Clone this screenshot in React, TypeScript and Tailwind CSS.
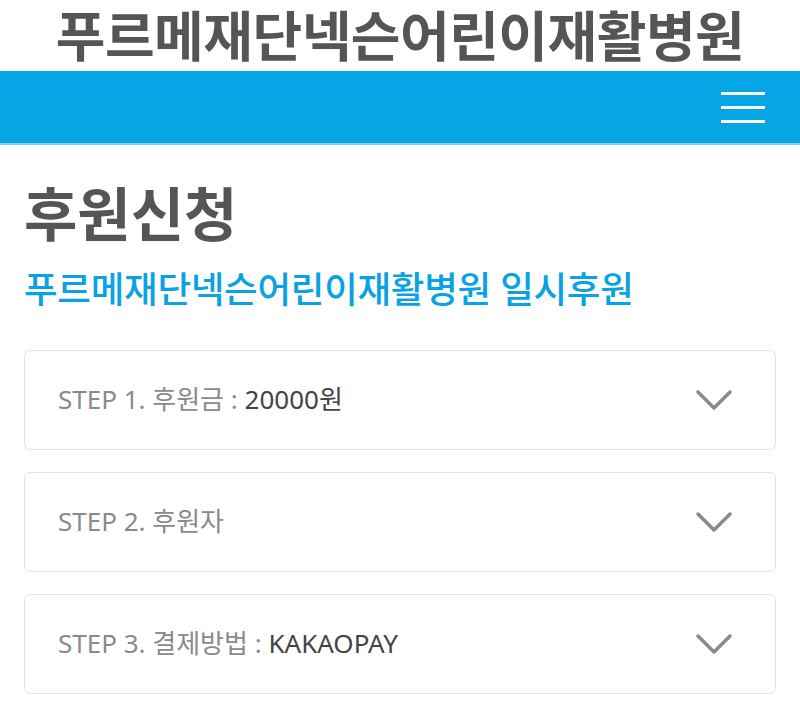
const steps = [
  { label: "STEP 1. 후원금 : ", value: "20000원" },
  { label: "STEP 2. 후원자", value: "" },
  { label: "STEP 3. 결제방법 : ", value: "KAKAOPAY" },
];

function Chevron() {
  return (
    <svg width="36" height="20" viewBox="0 0 36 20" fill="none" className="text-[#8a8a8a]">
      <polyline points="2,2 18,18 34,2" stroke="currentColor" strokeWidth="3.5" strokeLinecap="round" strokeLinejoin="round" />
    </svg>
  );
}

export default function App() {
  return (
    <div
      className="min-h-screen bg-white"
      style={{ fontFamily: '"Noto Sans", "Noto Sans CJK KR", sans-serif' }}
    >
      {/* 상단 로고 */}
      <header className="h-[71px] flex items-center justify-center">
        <h1 className="text-[54px] leading-none font-semibold text-[#555] tracking-[-0.5px]">
          푸르메재단넥슨어린이재활병원
        </h1>
      </header>

      {/* 네비게이션 바 */}
      <nav className="h-[74px] bg-[#05a5e6] border-b-2 border-[#7fd0f2] flex items-center justify-end pr-[35px]">
        <button className="flex flex-col gap-[11px] w-[44px]">
          <span className="block h-[3px] bg-white" />
          <span className="block h-[3px] bg-white" />
          <span className="block h-[3px] bg-white" />
        </button>
      </nav>

      <main className="px-6 pt-[40px]">
        <h2 className="text-[58px] leading-none font-bold text-[#555]">후원신청</h2>
        <p className="mt-[28px] text-[36.6px] leading-none font-medium text-[#09a3e3] tracking-[-0.3px]">
          푸르메재단넥슨어린이재활병원 일시후원
        </p>

        <div className="mt-[42px] flex flex-col gap-[22px]">
          {steps.map((s) => (
            <div
              key={s.label}
              className="h-[100px] border border-[#e3e3e3] rounded-md flex items-center justify-between pl-[33px] pr-[43px]"
            >
              <span className="text-[26px] text-[#8a8a8a]">
                {s.label}
                {s.value && <span className="text-[#444]">{s.value}</span>}
              </span>
              <Chevron />
            </div>
          ))}
        </div>
      </main>
    </div>
  );
}
